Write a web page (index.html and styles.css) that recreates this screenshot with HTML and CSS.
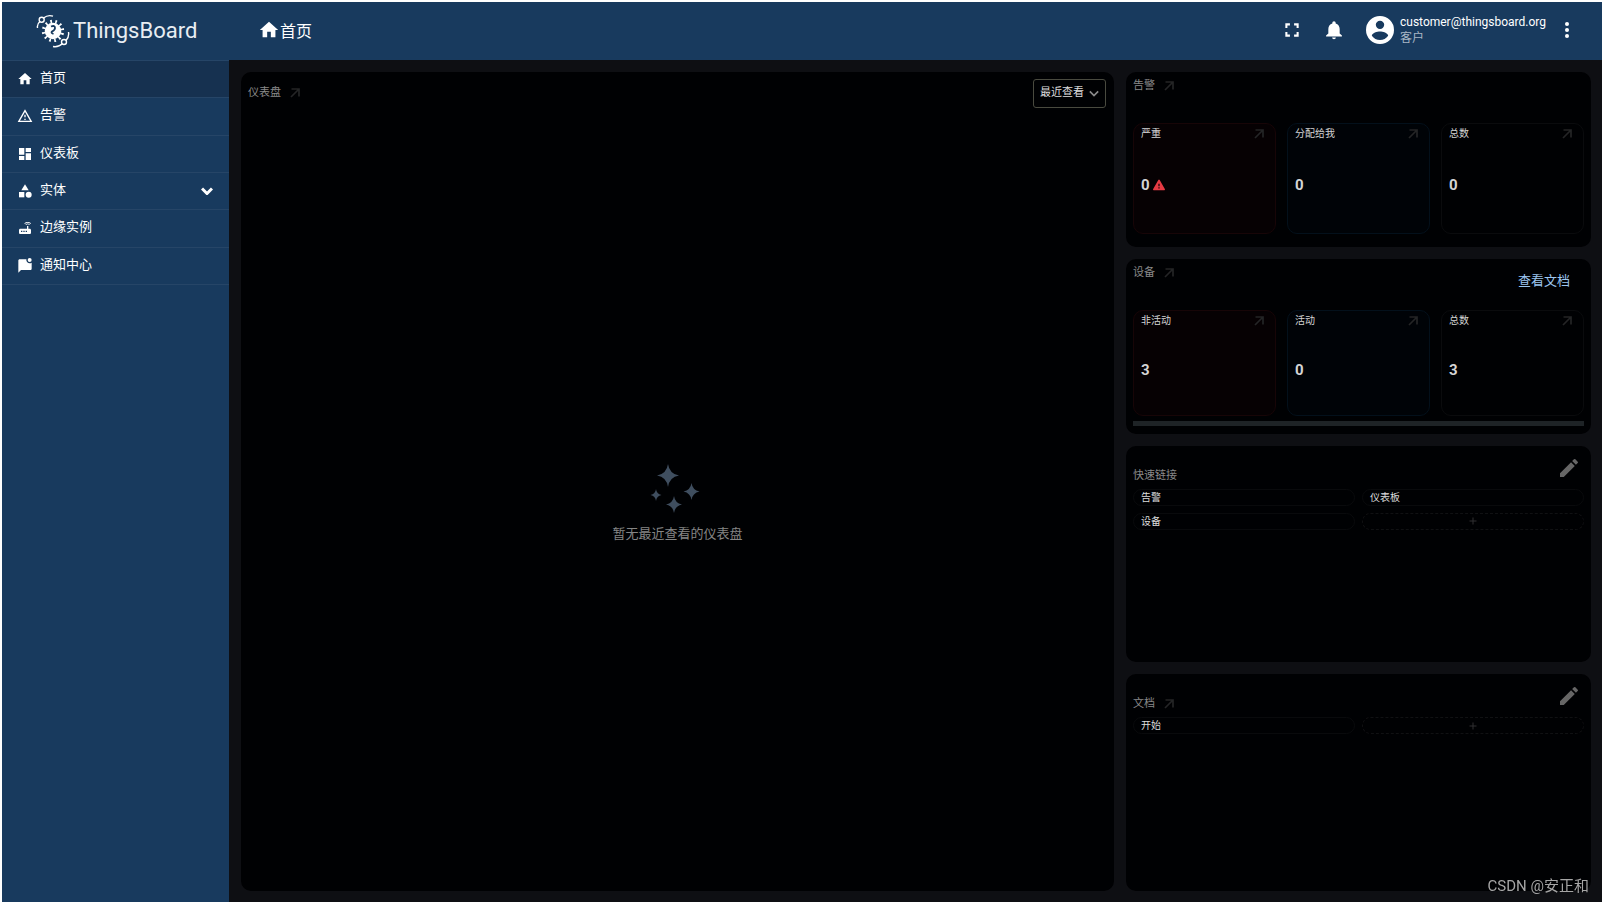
FILE: index.html
```html
<!DOCTYPE html>
<html lang="zh-CN">
<head>
    <meta charset="utf-8">
    <meta name="viewport" content="width=device-width, initial-scale=1">
    <title>ThingsBoard | 首页</title>
    <link rel="stylesheet" href="styles.css">
</head>
<body>
    <!-- shared icons -->
    <svg class="sprite" aria-hidden="true">
        <symbol id="home" viewBox="0 0 24 24"><path d="M10 20v-6h4v6h5v-8h3L12 3 2 12h3v8z"/></symbol>
        <symbol id="warn-outline" viewBox="0 0 24 24"><path d="M12 5.99 19.53 19H4.47L12 5.99M12 2 1 21h22L12 2zm1 14h-2v2h2v-2zm0-6h-2v4h2v-4z"/></symbol>
        <symbol id="warn" viewBox="0 0 24 24"><path d="M3 21h18q2 0 1-2L13.200 3.500q-1.200-2-2.400 0L2 19q-1 2 1 2zM13 18h-2v-2h2v2zm0-4h-2v-4h2v4z"/></symbol>
        <symbol id="dashboards" viewBox="0 0 24 24"><path d="M3 13h8V3H3v10zm0 8h8v-6H3v6zm10 0h8V11h-8v10zm0-18v6h8V3h-8z"/></symbol>
        <symbol id="entities" viewBox="0 0 24 24"><path d="m12 2-5.500 9h11z"/><circle cx="17.500" cy="17.500" r="4.500"/><path d="M3 13.500h8v8H3z"/></symbol>
        <symbol id="router" viewBox="0 0 24 24"><path d="m20.200 5.900.8-.8C19.600 3.700 17.800 3 16 3s-3.600.7-5 2.100l.8.8C13 4.800 14.500 4.200 16 4.200s3 .6 4.200 1.700zm-.9.8c-.9-.9-2.100-1.400-3.300-1.400s-2.400.5-3.300 1.400l.8.8c.7-.7 1.600-1 2.500-1s1.800.3 2.500 1l.8-.8zM19 13h-2V9h-2v4H5c-1.100 0-2 .9-2 2v4c0 1.100.9 2 2 2h14c1.100 0 2-.9 2-2v-4c0-1.100-.9-2-2-2zM8 18H6v-2h2v2zm3.500 0h-2v-2h2v2zm3.500 0h-2v-2h2v2z"/></symbol>
        <symbol id="message" viewBox="0 0 24 24"><path d="M22 6.980V16c0 1.100-.9 2-2 2H6l-4 4V4c0-1.100.9-2 2-2h10.100A5 5 0 0 0 19 8c1.130 0 2.160-.39 3-1.020zM16 3a3 3 0 1 0 6 0 3 3 0 0 0-6 0z"/></symbol>
        <symbol id="chevron" viewBox="0 0 12 8"><path d="m1 1.500 5 5 5-5" fill="none" stroke="currentColor"/></symbol>
        <symbol id="arrow" viewBox="0 0 10 10"><path d="M1.500 1h7.500v7.500M9 1 1 9" fill="none" stroke="currentColor" stroke-width="1.700"/></symbol>
        <symbol id="pencil" viewBox="0 0 24 24"><path d="M3 17.250V21h3.750L17.810 9.940l-3.750-3.750L3 17.250zM20.710 7.040a1 1 0 0 0 0-1.410l-2.340-2.340a1 1 0 0 0-1.410 0l-1.830 1.830 3.750 3.750 1.830-1.830z"/></symbol>
        <symbol id="plus" viewBox="0 0 8 8"><path d="M4 .5v7M.5 4h7" fill="none" stroke="currentColor"/></symbol>
    </svg>

    <div class="app">
        <aside class="sidebar">
            <a class="logo" href="#">
                <svg class="logo-mark" viewBox="0 0 34 34" aria-hidden="true">
                    <g fill="none" stroke="#fff" stroke-width="1.400">
                        <path d="M1.500 14C1 11 2 9 4 7.500M7.500 4C10 2 14 1.200 17 2.200"/>
                        <circle cx="5.700" cy="5.700" r="2.500"/>
                        <path d="M32.500 18c.5 3 0 6-2.500 8.500M26.500 29.500C24 32 20 33 17 32.500"/>
                        <circle cx="28" cy="28" r="2.500"/>
                        <circle cx="17" cy="17" r="9.500" stroke-width="3.400" stroke-dasharray="1.700 3.275" transform="rotate(12 17 17)"/>
                    </g>
                    <circle cx="17" cy="17" r="8.300" fill="#fff"/>
                    <path d="M15 12.500q4-1.500 4 1.500 0 2-3 3.500-1.500 1.500 1.500 2.500" fill="none" stroke="#183a5e" stroke-width="1.800"/>
                </svg>
                <span>ThingsBoard</span>
            </a>
            <nav class="menu">
                <a class="menu-item active" href="#"><svg class="icon"><use href="#home"/></svg>首页</a>
                <a class="menu-item" href="#"><svg class="icon"><use href="#warn-outline"/></svg>告警</a>
                <a class="menu-item" href="#"><svg class="icon"><use href="#dashboards"/></svg>仪表板</a>
                <a class="menu-item" href="#"><svg class="icon"><use href="#entities"/></svg>实体<svg class="toggle"><use href="#chevron"/></svg></a>
                <a class="menu-item" href="#"><svg class="icon"><use href="#router"/></svg>边缘实例</a>
                <a class="menu-item" href="#"><svg class="icon"><use href="#message"/></svg>通知中心</a>
            </nav>
        </aside>

        <div class="page">
            <header class="toolbar">
                <h1 class="breadcrumb"><svg><use href="#home"/></svg><span>首页</span></h1>
                <button class="tool" aria-label="全屏">
                    <svg viewBox="0 0 24 24"><path d="M4 4h5.500v2.500h-3v3H4zM14.500 4H20v5.500h-2.500v-3h-3zM4 14.500h2.500v3h3V20H4zM17.500 14.500H20V20h-5.500v-2.500h3z"/></svg>
                </button>
                <button class="tool" aria-label="通知">
                    <svg viewBox="0 0 24 24"><path d="M12 23c1.200 0 2.200-.9 2.200-2.100H9.800c0 1.200 1 2.100 2.200 2.100zm6.800-6.800v-5.300c0-3.300-1.700-6-4.800-6.700v-.8a2 2 0 0 0-4 0v.8c-3.100.7-4.800 3.400-4.800 6.700v5.300L2.500 18.500v1.300h19v-1.300z"/></svg>
                </button>
                <div class="user">
                    <svg class="avatar" viewBox="0 0 24 24" aria-hidden="true"><path d="M12 0a12 12 0 1 0 0 24 12 12 0 0 0 0-24zm0 4a3.600 3.600 0 1 1 0 7.200A3.600 3.600 0 0 1 12 4zm0 16.600a8.600 8.600 0 0 1-7-3.700c0-2.300 4.700-3.600 7-3.600s7 1.300 7 3.600a8.600 8.600 0 0 1-7 3.700z"/></svg>
                    <div class="user-info">
                        <span class="email">customer@thingsboard.org</span>
                        <span class="role">客户</span>
                    </div>
                </div>
                <button class="more" aria-label="更多">
                    <svg viewBox="0 0 6 16"><circle cx="3" cy="2" r="2"/><circle cx="3" cy="8" r="2"/><circle cx="3" cy="14" r="2"/></svg>
                </button>
            </header>

            <main class="content">
                <section class="card recent">
                    <div class="recent-head">
                        <a class="title" href="#">仪表盘<svg class="arrow"><use href="#arrow"/></svg></a>
                        <div class="select">
                            <select aria-label="仪表盘">
                                <option>最近查看</option>
                            </select>
                            <svg><use href="#chevron"/></svg>
                        </div>
                    </div>
                    <div class="empty">
                        <svg viewBox="0 0 50 50" aria-hidden="true">
                            <path d="M18 1q1.500 10 11 11.500-9.500 1.500-11 11.500Q16.500 14 7 12.500 16.500 11 18 1z"/>
                            <path d="M41.500 20q1 7 8 8.500-7 1.500-8 8.500-1-7-8-8.500 7-1.500 8-8.500z"/>
                            <path d="M6 26q.6 5 5.500 6-4.900 1-5.500 6-.6-5-5.500-6 4.900-1 5.500-6z"/>
                            <path d="M24 33q1 7 8 8.500-7 1.500-8 8.500-1-7-8-8.500 7-1.500 8-8.500z"/>
                        </svg>
                        <p>暂无最近查看的仪表盘</p>
                    </div>
                </section>

                <div class="widgets">
                    <section class="card alarms">
                        <div class="card-head">
                            <a class="title" href="#">告警<svg class="arrow"><use href="#arrow"/></svg></a>
                        </div>
                        <div class="stats">
                            <a class="stat critical" href="#">
                                <span class="stat-label">严重<svg class="arrow"><use href="#arrow"/></svg></span>
                                <span class="stat-value">0<svg class="alert"><use href="#warn"/></svg></span>
                            </a>
                            <a class="stat info" href="#">
                                <span class="stat-label">分配给我<svg class="arrow"><use href="#arrow"/></svg></span>
                                <span class="stat-value">0</span>
                            </a>
                            <a class="stat" href="#">
                                <span class="stat-label">总数<svg class="arrow"><use href="#arrow"/></svg></span>
                                <span class="stat-value">0</span>
                            </a>
                        </div>
                    </section>

                    <section class="card devices">
                        <div class="card-head">
                            <a class="title" href="#">设备<svg class="arrow"><use href="#arrow"/></svg></a>
                            <a class="docs-link" href="#">查看文档</a>
                        </div>
                        <div class="stats">
                            <a class="stat critical" href="#">
                                <span class="stat-label">非活动<svg class="arrow"><use href="#arrow"/></svg></span>
                                <span class="stat-value">3</span>
                            </a>
                            <a class="stat info" href="#">
                                <span class="stat-label">活动<svg class="arrow"><use href="#arrow"/></svg></span>
                                <span class="stat-value">0</span>
                            </a>
                            <a class="stat" href="#">
                                <span class="stat-label">总数<svg class="arrow"><use href="#arrow"/></svg></span>
                                <span class="stat-value">3</span>
                            </a>
                        </div>
                        <div class="bar"></div>
                    </section>

                    <section class="card">
                        <div class="links-head">
                            <h2 class="title">快速链接</h2>
                            <button class="edit" aria-label="编辑快速链接"><svg><use href="#pencil"/></svg></button>
                        </div>
                        <div class="links">
                            <a class="link" href="#">告警</a>
                            <a class="link" href="#">仪表板</a>
                            <a class="link" href="#">设备</a>
                            <button class="link add" aria-label="添加链接"><svg><use href="#plus"/></svg></button>
                        </div>
                    </section>

                    <section class="card">
                        <div class="links-head">
                            <a class="title" href="#">文档<svg class="arrow"><use href="#arrow"/></svg></a>
                            <button class="edit" aria-label="编辑文档"><svg><use href="#pencil"/></svg></button>
                        </div>
                        <div class="links">
                            <a class="link" href="#">开始</a>
                            <button class="link add" aria-label="添加文档"><svg><use href="#plus"/></svg></button>
                        </div>
                    </section>
                </div>
            </main>
        </div>
    </div>
    <div class="watermark">CSDN @安正和</div>
</body>
</html>
```
FILE: styles.css
```css
* {
    box-sizing: border-box;
}

body {
    margin: 0;
    padding: 2px;
    background: #fff;
    color: #fff;
    font: 13px/20px Roboto, "Noto Sans CJK SC", sans-serif;
}

a {
    color: inherit;
    text-decoration: none;
}

button {
    padding: 0;
    border: 0;
    background: none;
    color: inherit;
    cursor: pointer;
}

svg {
    display: block;
    flex: none;
    fill: currentColor;
}

h1, h2, p {
    margin: 0;
    font-weight: 400;
}

.sprite {
    display: none;
}

.app {
    display: flex;
    min-height: calc(100vh - 4px);
    background: #0e0f13;
}

/* sidebar */

.sidebar {
    flex: none;
    width: 227px;
    background: #183a5e;
}

.logo {
    display: flex;
    align-items: center;
    gap: 3px;
    height: 58px;
    padding-left: 34px;
    color: #e8edf2;
    font-size: 22px;
}

.logo-mark {
    width: 34px;
    height: 34px;
}

.menu {
    display: grid;
    grid-auto-rows: 1fr;
    height: 225px;
    border-top: 1px solid #264567;
}

.menu-item {
    display: flex;
    align-items: center;
    padding: 0 16px 2px 15px;
    border-bottom: 1px solid #264567;
}

.menu-item.active {
    background: #163150;
}

.menu-item .icon {
    width: 16px;
    height: 16px;
    margin: 2px 7px 0 0;
}

.menu-item .toggle {
    width: 12px;
    height: 8px;
    margin: 2px 0 0 auto;
    stroke-width: 3;
}

/* toolbar */

.page {
    display: flex;
    flex: 1;
    flex-direction: column;
    min-width: 0;
}

.toolbar {
    display: flex;
    align-items: center;
    height: 58px;
    padding: 0 32px 2px 29px;
    background: #183a5e;
}

.breadcrumb {
    display: flex;
    align-items: center;
    margin-right: auto;
    font-size: 16px;
}

.breadcrumb svg {
    width: 22px;
    height: 22px;
}

.breadcrumb span {
    padding-top: 3px;
}

.tool {
    margin-right: 22px;
}

.tool svg {
    width: 20px;
    height: 20px;
}

.user {
    display: flex;
    align-items: center;
    gap: 6px;
}

.avatar {
    width: 28px;
    height: 28px;
}

.user-info {
    display: flex;
    flex-direction: column;
    font-size: 12px;
    line-height: 16px;
}

.role {
    color: #a9b7c6;
}

.more {
    margin-left: 18px;
}

.more svg {
    width: 6px;
    height: 16px;
}

/* home dashboard */

.content {
    display: grid;
    flex: 1;
    grid-template-columns: 873fr 465fr;
    gap: 12px;
    padding: 12px 11px 11px 12px;
}

.widgets {
    display: grid;
    grid-template-rows: 175fr 175fr 217fr 217fr;
    gap: 12px;
}

.card {
    display: flex;
    flex-direction: column;
    min-width: 0;
    padding: 7px;
    border-radius: 10px;
    background: #000103;
}

.title {
    display: flex;
    align-items: center;
    color: #898989;
    font-size: 11px;
    line-height: 14px;
}

.arrow {
    width: 10px;
    height: 10px;
    margin-left: 9px;
    color: #242526;
}

.recent-head {
    display: flex;
    align-items: flex-start;
    justify-content: space-between;
}

.recent-head .title {
    padding-top: 7px;
}

.select {
    display: flex;
    align-items: center;
    margin-right: 1px;
}

.select select {
    width: 73px;
    height: 29px;
    padding: 0 6px 2px;
    border: 1px solid #494a3f;
    border-radius: 3px;
    background: none;
    color: #ddd;
    font: inherit;
    font-size: 11px;
    appearance: none;
}

.select svg {
    width: 10px;
    height: 7px;
    margin: 0 7px 0 -17px;
    color: #8a8a8a;
    stroke-width: 2;
    pointer-events: none;
}

.empty {
    display: flex;
    flex: 1;
    flex-direction: column;
    align-items: center;
    justify-content: center;
    gap: 11px;
    padding-top: 15px;
    color: #858585;
}

.empty svg {
    width: 50px;
    height: 50px;
    margin-right: 5px;
    color: #3f4e5f;
}

.card-head {
    display: flex;
    align-items: flex-start;
    justify-content: space-between;
    height: 44px;
}

.docs-link {
    padding: 5px 14px 0 0;
    color: #9cc6f0;
}

.stats {
    display: grid;
    flex: 1;
    grid-template-columns: repeat(3, 1fr);
    gap: 11px;
}

.alarms .stats {
    margin-bottom: 6px;
}

.stat {
    display: flex;
    flex-direction: column;
    padding: 3px 7px;
    border: 1px solid #0a0b0d;
    border-radius: 10px;
    color: #d4d4d4;
}

.stat.critical {
    border-color: #170507;
    background: #060103;
}

.stat.info {
    border-color: #03101b;
    background: #000307;
}

.stat-label {
    display: flex;
    align-items: center;
    justify-content: space-between;
    padding-right: 4px;
    font-size: 10px;
    line-height: 14px;
}

.stat-value {
    display: flex;
    flex: 1;
    align-items: center;
    gap: 2px;
    font-size: 15px;
    font-weight: 700;
}

.alert {
    width: 14px;
    height: 14px;
    color: #e53a43;
}

.bar {
    height: 5px;
    margin: 5px 0 1px;
    background: #1e2326;
}

.links-head {
    display: flex;
    align-items: flex-end;
    justify-content: space-between;
    height: 36px;
    padding-bottom: 9px;
}

.links-head .title {
    margin-bottom: -3px;
}

.edit {
    margin-right: 3px;
    color: #666;
}

.edit svg {
    width: 24px;
    height: 24px;
}

.links {
    display: grid;
    grid-template-columns: 1fr 1fr;
    gap: 7px;
}

.link {
    height: 17px;
    padding: 0 7px;
    border: 1px solid #090a0c;
    border-radius: 9px;
    color: #ddd;
    font-size: 10px;
    line-height: 15px;
}

.link.add {
    display: flex;
    align-items: center;
    justify-content: center;
    border: 1px dashed #101113;
    color: #303133;
}

.link.add svg {
    width: 8px;
    height: 8px;
}

.watermark {
    position: fixed;
    right: 15px;
    bottom: 8px;
    color: #a5a5a5;
    font-size: 15px;
}
```
